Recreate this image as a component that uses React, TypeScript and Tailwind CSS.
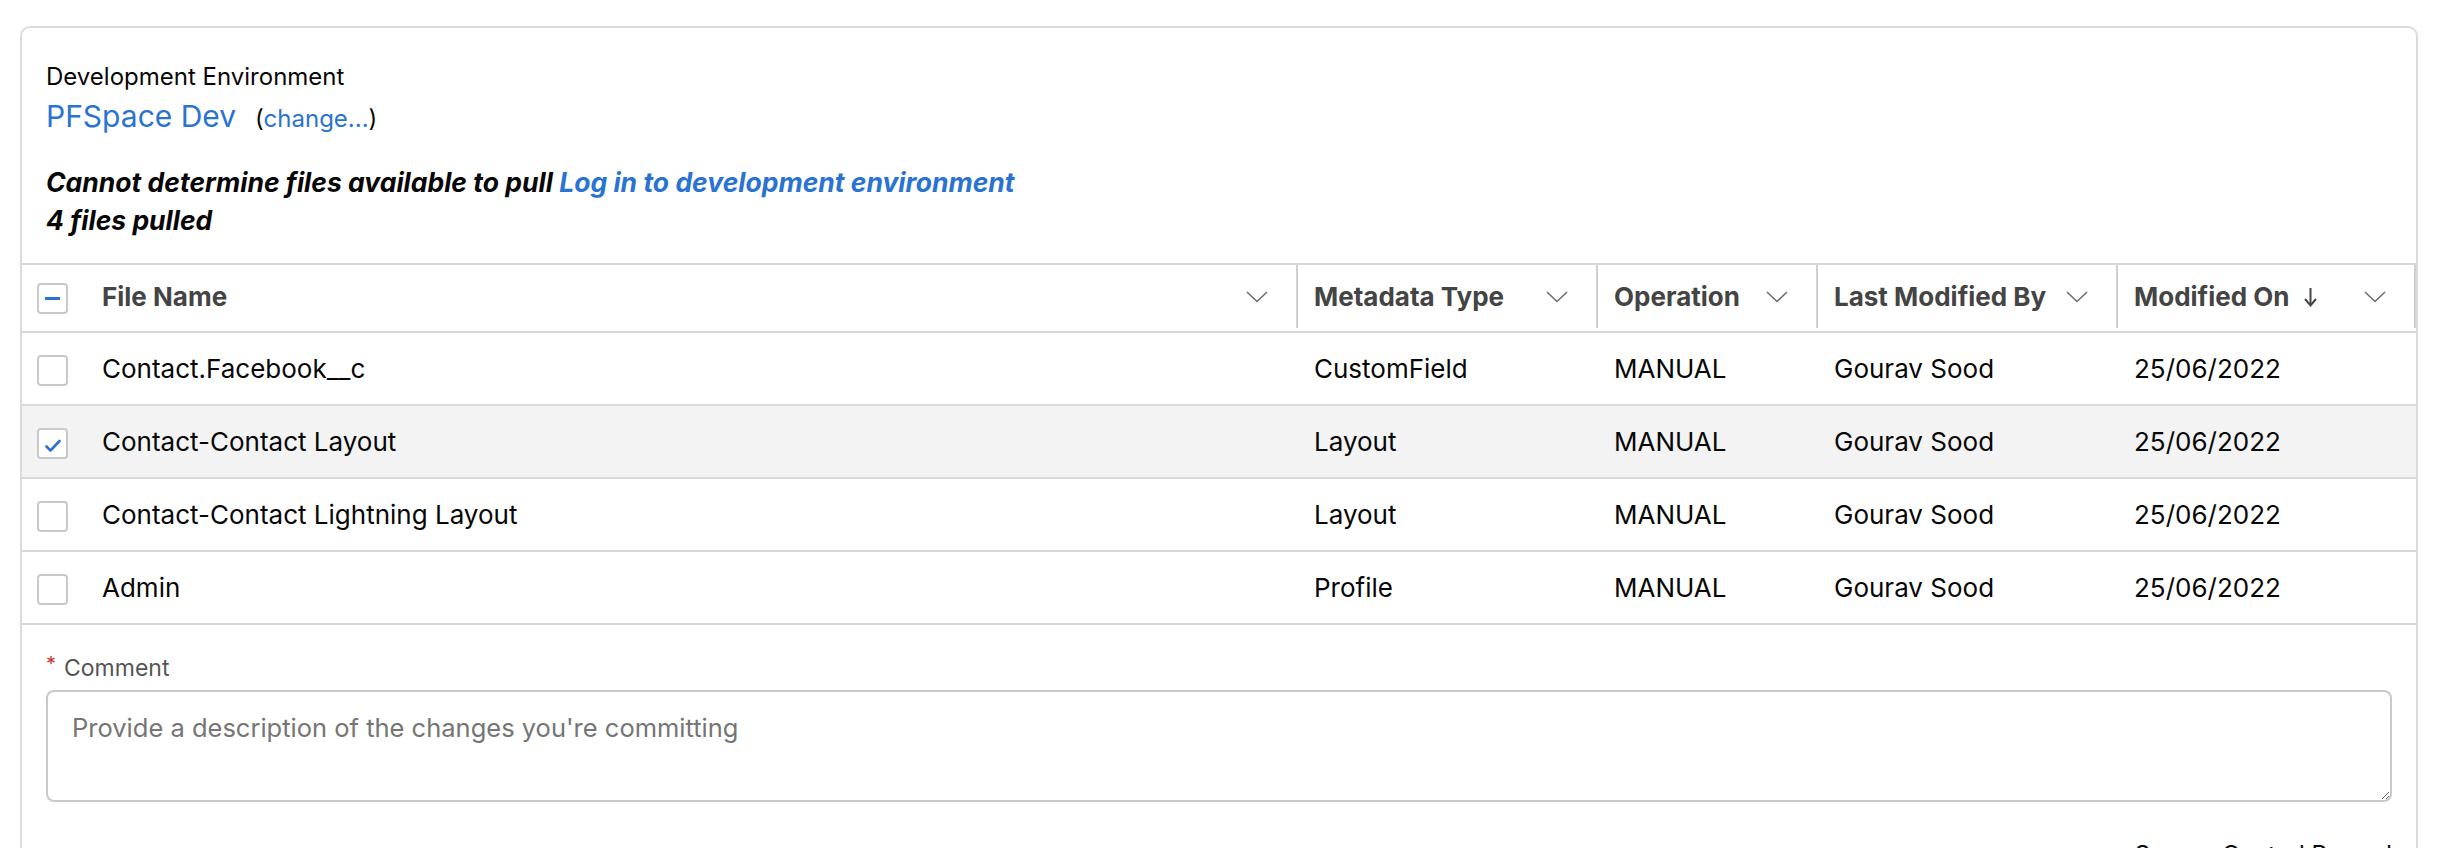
import React from 'react';

const font = { fontFamily: 'Inter, "Noto Sans", sans-serif' };

const rows = [
  { name: 'Contact.Facebook__c', type: 'CustomField', op: 'MANUAL', by: 'Gourav Sood', on: '25/06/2022', checked: false },
  { name: 'Contact-Contact Layout', type: 'Layout', op: 'MANUAL', by: 'Gourav Sood', on: '25/06/2022', checked: true },
  { name: 'Contact-Contact Lightning Layout', type: 'Layout', op: 'MANUAL', by: 'Gourav Sood', on: '25/06/2022', checked: false },
  { name: 'Admin', type: 'Profile', op: 'MANUAL', by: 'Gourav Sood', on: '25/06/2022', checked: false },
];

function Chevron() {
  return (
    <svg width="22" height="12" viewBox="0 0 22 12" className="shrink-0">
      <polyline points="1,1 11,10.5 21,1" fill="none" stroke="#706e6b" strokeWidth="1.6" />
    </svg>
  );
}

function Checkbox({ state }: { state: 'none' | 'checked' | 'mixed' }) {
  return (
    <div className="w-[31px] h-[31px] rounded-[4px] border-2 border-[#c9c9c9] bg-white flex items-center justify-center">
      {state === 'mixed' && <div className="w-[15px] h-[3px] bg-[#2a73d2]" />}
      {state === 'checked' && (
        <svg width="16" height="14" viewBox="0 0 16 14" className="mt-[4px]">
          <path d="M1.5 7.5 L5.5 11.5 L14.5 2" fill="none" stroke="#2a73d2" strokeWidth="2.6" strokeLinecap="round" strokeLinejoin="round" />
        </svg>
      )}
    </div>
  );
}

function HeaderCell({ label, sorted }: { label: string; sorted?: boolean }) {
  return (
    <div className="flex items-center justify-between pl-4 pr-[28px] border-r-2 border-[#d0d0d0] h-[63px] self-start">
      <div className="flex items-center gap-[14px]">
        <span className="text-[26px] font-bold text-[#444444]">{label}</span>
        {sorted && (
          <svg width="15" height="22" viewBox="0 0 15 22">
            <line x1="7.5" y1="2" x2="7.5" y2="19" stroke="#444444" strokeWidth="2" />
            <polyline points="2,13 7.5,19.5 13,13" fill="none" stroke="#444444" strokeWidth="2" />
          </svg>
        )}
      </div>
      <Chevron />
    </div>
  );
}

export default function App() {
  return (
    <div className="min-h-screen bg-white pt-[26px] pl-[20px]" style={font}>
      <div className="w-[2398px] border-2 border-b-0 border-[#dddbda] rounded-t-[10px] pb-[60px]">
        <div className="pl-[24px] pt-[34px]">
          <div className="text-[24px] leading-[30px] text-[#080707]">Development Environment</div>
          <div className="mt-[4px] flex items-baseline">
            <span className="text-[30px] leading-[40px] text-[#2a73d2]">PFSpace Dev</span>
            <span className="ml-[19px] text-[24px] text-[#080707]">
              (<span className="text-[#2a73d2]">change...</span>)
            </span>
          </div>
          <div className="mt-[26px] text-[26.5px] leading-[38px] font-bold italic text-[#080707]">
            <div>
              Cannot determine files available to pull{' '}
              <span className="text-[#2a73d2]">Log in to development environment</span>
            </div>
            <div>4 files pulled</div>
          </div>
        </div>

        <div className="mt-[24px] border-t-2 border-[#d8d8d8]">
          <div className="grid grid-cols-[64px_1212px_300px_220px_300px_298px] h-[66px] items-center">
            <div className="pl-[15px] flex items-center">
              <Checkbox state="mixed" />
            </div>
            <HeaderCell label="File Name" />
            <HeaderCell label="Metadata Type" />
            <HeaderCell label="Operation" />
            <HeaderCell label="Last Modified By" />
            <HeaderCell label="Modified On" sorted />
          </div>
          {rows.map((r) => (
            <div
              key={r.name}
              className={`grid grid-cols-[64px_1212px_300px_220px_300px_298px] h-[73px] items-center border-t-2 border-[#d8d8d8] text-[26px] text-[#080707] ${r.checked ? 'bg-[#f3f3f3]' : 'bg-white'}`}
            >
              <div className="pl-[15px] flex items-center pt-[4px]">
                <Checkbox state={r.checked ? 'checked' : 'none'} />
              </div>
              <div className="pl-4">{r.name}</div>
              <div className="pl-4">{r.type}</div>
              <div className="pl-4">{r.op}</div>
              <div className="pl-4">{r.by}</div>
              <div className="pl-4">{r.on}</div>
            </div>
          ))}
          <div className="border-t-2 border-[#d8d8d8]" />
        </div>

        <div className="px-[24px] pt-[28px]">
          <div className="flex items-center text-[23px] leading-[30px] text-[#555555]">
            <span className="text-[#c23934] mr-[8px] -mt-[8px] text-[20px]">*</span>
            <span>Comment</span>
          </div>
          <textarea
            className="mt-[7px] block w-full h-[112px] border-2 border-[#c9c9c9] rounded-[8px] px-[24px] pt-[16px] text-[25.5px] leading-[39px] text-[#080707] placeholder:text-[#757575] outline-none"
            placeholder="Provide a description of the changes you're committing"
            style={font}
          />
          <div className="mt-[38px] text-right text-[24px] leading-[30px] text-[#080707]">Source Control Record</div>
        </div>
      </div>
    </div>
  );
}
